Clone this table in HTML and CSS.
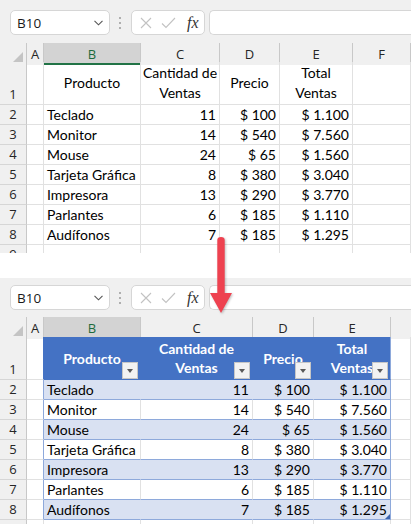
FILE: index.html
```html
<!DOCTYPE html>
<html lang="es">
<head>
<meta charset="utf-8">
<title>Tabla Excel</title>
<link rel="stylesheet" href="styles.css">
</head>
<body>
<div class="page">
  <section class="sheet sheet-top">
    <div class="toolbar">
      <div class="namebox"><span>B10</span><svg class="chev" width="9" height="6" viewBox="0 0 9 6"><path d="M0.5 0.8 L4.5 4.8 L8.5 0.8" fill="none" stroke="#555" stroke-width="1.1"/></svg></div>
      <svg class="dots" width="4" height="14" viewBox="0 0 4 14"><circle cx="2" cy="2" r="1" fill="#9a9a9a"/><circle cx="2" cy="7" r="1" fill="#9a9a9a"/><circle cx="2" cy="12" r="1" fill="#9a9a9a"/></svg>
      <div class="fxbox">
        <svg width="12" height="12" viewBox="0 0 12 12"><path d="M1 1 L11 11 M11 1 L1 11" stroke="#c2c2c2" stroke-width="1.1"/></svg>
        <svg width="15" height="12" viewBox="0 0 15 12"><path d="M1 6.5 L5 10.5 L14 1" fill="none" stroke="#c2c2c2" stroke-width="1.1"/></svg>
        <span class="fx">fx</span>
      </div>
      <div class="formula"></div>
    </div>
    <div class="row colhdr">
      <div class="corner"><svg width="10" height="10" viewBox="0 0 10 10"><polygon points="10,0 10,10 0,10" fill="#c4c4c4"/></svg></div>
      <div class="ch">A</div><div class="ch sel">B</div><div class="ch">C</div><div class="ch">D</div><div class="ch">E</div><div class="ch">F</div>
    </div>
    <div class="row r1">
      <div class="rh">1</div><div class="c"></div>
      <div class="c hd">Producto</div><div class="c hd">Cantidad de<br>Ventas</div><div class="c hd">Precio</div><div class="c hd">Total<br>Ventas</div><div class="c"></div>
    </div>
    <div class="row rn"><div class="rh">2</div><div class="c"></div><div class="c">Teclado</div><div class="c num">11</div><div class="c num">$ 100</div><div class="c num">$ 1.100</div><div class="c"></div></div>
    <div class="row rn"><div class="rh">3</div><div class="c"></div><div class="c">Monitor</div><div class="c num">14</div><div class="c num">$ 540</div><div class="c num">$ 7.560</div><div class="c"></div></div>
    <div class="row rn"><div class="rh">4</div><div class="c"></div><div class="c">Mouse</div><div class="c num">24</div><div class="c num">$ 65</div><div class="c num">$ 1.560</div><div class="c"></div></div>
    <div class="row rn"><div class="rh">5</div><div class="c"></div><div class="c">Tarjeta Gráfica</div><div class="c num">8</div><div class="c num">$ 380</div><div class="c num">$ 3.040</div><div class="c"></div></div>
    <div class="row rn"><div class="rh">6</div><div class="c"></div><div class="c">Impresora</div><div class="c num">13</div><div class="c num">$ 290</div><div class="c num">$ 3.770</div><div class="c"></div></div>
    <div class="row rn"><div class="rh">7</div><div class="c"></div><div class="c">Parlantes</div><div class="c num">6</div><div class="c num">$ 185</div><div class="c num">$ 1.110</div><div class="c"></div></div>
    <div class="row rn"><div class="rh">8</div><div class="c"></div><div class="c">Audífonos</div><div class="c num">7</div><div class="c num">$ 185</div><div class="c num">$ 1.295</div><div class="c"></div></div>
    <div class="row rn"><div class="rh">9</div><div class="c"></div><div class="c"></div><div class="c"></div><div class="c"></div><div class="c"></div><div class="c"></div></div>
  </section>

  <div class="spacer"></div>

  <section class="sheet sheet-bottom">
    <div class="toolbar">
      <div class="namebox"><span>B10</span><svg class="chev" width="9" height="6" viewBox="0 0 9 6"><path d="M0.5 0.8 L4.5 4.8 L8.5 0.8" fill="none" stroke="#555" stroke-width="1.1"/></svg></div>
      <svg class="dots" width="4" height="14" viewBox="0 0 4 14"><circle cx="2" cy="2" r="1" fill="#9a9a9a"/><circle cx="2" cy="7" r="1" fill="#9a9a9a"/><circle cx="2" cy="12" r="1" fill="#9a9a9a"/></svg>
      <div class="fxbox">
        <svg width="12" height="12" viewBox="0 0 12 12"><path d="M1 1 L11 11 M11 1 L1 11" stroke="#c2c2c2" stroke-width="1.1"/></svg>
        <svg width="15" height="12" viewBox="0 0 15 12"><path d="M1 6.5 L5 10.5 L14 1" fill="none" stroke="#c2c2c2" stroke-width="1.1"/></svg>
        <span class="fx">fx</span>
      </div>
      <div class="formula"></div>
    </div>
    <div class="row colhdr">
      <div class="corner"><svg width="10" height="10" viewBox="0 0 10 10"><polygon points="10,0 10,10 0,10" fill="#c4c4c4"/></svg></div>
      <div class="ch">A</div><div class="ch sel">B</div><div class="ch">C</div><div class="ch">D</div><div class="ch">E</div><div class="ch blank"></div>
    </div>
    <div class="row r1">
      <div class="rh">1</div><div class="c a-edge-h"></div>
      <div class="c th">Producto<span class="fbtn"></span></div>
      <div class="c th">Cantidad de<br>Ventas<span class="fbtn"></span></div>
      <div class="c th">Precio<span class="fbtn"></span></div>
      <div class="c th">Total<br>Ventas<span class="fbtn"></span></div>
      <div class="c"></div>
    </div>
    <div class="row rn band"><div class="rh">2</div><div class="c a-edge"></div><div class="c tb">Teclado</div><div class="c tb num">11</div><div class="c tb num">$ 100</div><div class="c tb num last">$ 1.100</div><div class="c"></div></div>
    <div class="row rn"><div class="rh">3</div><div class="c a-edge"></div><div class="c tb">Monitor</div><div class="c tb num">14</div><div class="c tb num">$ 540</div><div class="c tb num last">$ 7.560</div><div class="c"></div></div>
    <div class="row rn band"><div class="rh">4</div><div class="c a-edge"></div><div class="c tb">Mouse</div><div class="c tb num">24</div><div class="c tb num">$ 65</div><div class="c tb num last">$ 1.560</div><div class="c"></div></div>
    <div class="row rn"><div class="rh">5</div><div class="c a-edge"></div><div class="c tb">Tarjeta Gráfica</div><div class="c tb num">8</div><div class="c tb num">$ 380</div><div class="c tb num last">$ 3.040</div><div class="c"></div></div>
    <div class="row rn band"><div class="rh">6</div><div class="c a-edge"></div><div class="c tb">Impresora</div><div class="c tb num">13</div><div class="c tb num">$ 290</div><div class="c tb num last">$ 3.770</div><div class="c"></div></div>
    <div class="row rn"><div class="rh">7</div><div class="c a-edge"></div><div class="c tb">Parlantes</div><div class="c tb num">6</div><div class="c tb num">$ 185</div><div class="c tb num last">$ 1.110</div><div class="c"></div></div>
    <div class="row rn band"><div class="rh">8</div><div class="c a-edge"></div><div class="c tb">Audífonos</div><div class="c tb num">7</div><div class="c tb num">$ 185</div><div class="c tb num last">$ 1.295<span class="handle"></span></div><div class="c"></div></div>
    <div class="row rn"><div class="rh"></div><div class="c"></div><div class="c"></div><div class="c"></div><div class="c"></div><div class="c"></div><div class="c"></div></div>
  </section>

  <svg class="arrow" width="26" height="80" viewBox="0 0 26 80">
    <path d="M9.3 4 Q9.3 1 13 1 Q16.7 1 16.7 4 L16.7 57 L24 57 L13 77 L2 57 L9.3 57 Z" fill="#ee4250"/>
  </svg>
</div>
</body>
</html>
```

FILE: styles.css
```css
* { box-sizing: border-box; }

body {
  margin: 0;
  background: #ffffff;
  font-family: Lato, "Liberation Sans", sans-serif;
  color: #000;
}

.page {
  position: relative;
  width: 411px;
  height: 524px;
  overflow: hidden;
}

.sheet { overflow: hidden; }
.sheet-top { height: 253px; --cols: 27px 17px 97px 79px 60px 73px 58px; }
.spacer { height: 25px; }
.sheet-bottom { height: 246px; --cols: 27px 17px 97px 112px 61px 77px 20px; }

/* toolbar */
.toolbar {
  display: flex;
  align-items: flex-start;
  background: #f0f0f0;
  padding-left: 10px;
}
.sheet-top .toolbar { height: 43px; padding-top: 10px; }
.sheet-bottom .toolbar { height: 39px; padding-top: 7px; }

.namebox {
  width: 100px;
  height: 25px;
  background: #fff;
  border: 1px solid #d6d6d6;
  border-radius: 5px;
  display: flex;
  align-items: center;
  justify-content: space-between;
  padding: 0 6px 0 6px;
  font-family: "Open Sans", "Noto Sans", sans-serif;
  font-size: 13.5px;
  color: #1a1a1a;
}

.dots { margin: 6px 0 0 8px; }

.fxbox {
  margin-left: 9px;
  width: 74px;
  height: 25px;
  background: #fff;
  border: 1px solid #d6d6d6;
  border-radius: 5px;
  display: flex;
  align-items: center;
  gap: 9px;
  padding-left: 8px;
}
.fx {
  font-family: "Liberation Serif", serif;
  font-style: italic;
  font-size: 16px;
  color: #333;
  margin-left: 2px;
}

.formula {
  flex: 1;
  margin-left: 4px;
  height: 25px;
  background: #fff;
  border: 1px solid #d6d6d6;
  border-right: none;
  border-radius: 5px 0 0 5px;
}

/* grid rows */
.row {
  display: grid;
  grid-template-columns: var(--cols);
}
.sheet-top .colhdr { height: 19px; }
.sheet-bottom .colhdr { height: 20px; }
.r1 { height: 43px; }
.rn { height: 20px; }

.corner {
  background: #f0f0f0;
  border-right: 1px solid #c8c8c8;
  display: flex;
  align-items: flex-end;
  justify-content: flex-end;
  padding: 0 3px 3px 0;
}

.ch {
  background: #f0f0f0;
  border-right: 1px solid #c8c8c8;
  display: flex;
  align-items: center;
  justify-content: center;
  font-family: "Open Sans", "Noto Sans", sans-serif;
  font-size: 13px;
  color: #262626;
}
.ch.sel {
  background: #d3d3d3;
  color: #1d6b3c;
  border-bottom: 2px solid #217346;
  padding-top: 2px;
}
.ch.blank { border-right: none; }

.rh {
  background: #f0f0f0;
  border-right: 1px solid #c8c8c8;
  border-bottom: 1px solid #d6d6d6;
  display: flex;
  align-items: flex-end;
  justify-content: center;
  font-family: "Open Sans", "Noto Sans", sans-serif;
  font-size: 13px;
  color: #262626;
  padding-bottom: 1px;
}

.c {
  position: relative;
  border-right: 1px solid #e1e1e1;
  border-bottom: 1px solid #e1e1e1;
  display: flex;
  align-items: flex-end;
  padding: 0 3px 0 3px;
  font-size: 14px;
  line-height: 19px;
  white-space: nowrap;
}
.num { justify-content: flex-end; }

.hd {
  align-items: center;
  justify-content: center;
  text-align: center;
  line-height: 20px;
}

/* table (bottom) */
.a-edge-h { border-right-color: #4472c4; }
.a-edge { border-right-color: #8ea9db; }

.th {
  background: #4472c4;
  border-right-color: #4472c4;
  border-bottom-color: #4472c4;
  color: #fff;
  font-weight: bold;
  align-items: center;
  justify-content: center;
  text-align: center;
  line-height: 19px;
}
.th:nth-child(6) { border-right-color: #8ea9db; }

.fbtn {
  position: absolute;
  right: 2px;
  bottom: 0;
  width: 16px;
  height: 17px;
  background: #f2f2f2;
  border: 1px solid #c6c6c6;
}
.fbtn::after {
  content: "";
  position: absolute;
  left: 4px;
  top: 6px;
  border-left: 3.5px solid transparent;
  border-right: 3.5px solid transparent;
  border-top: 4px solid #5a5a5a;
}

.tb { border-bottom-color: #8ea9db; }
.band .tb { background: #d9e1f2; border-right-color: #d9e1f2; }
.tb.last { border-right-color: #8ea9db; }
.band .tb.last { border-right-color: #8ea9db; }

.handle {
  position: absolute;
  right: 0;
  bottom: 0;
  width: 0;
  height: 0;
  border-left: 5px solid transparent;
  border-bottom: 5px solid #3b64b0;
}

.arrow {
  position: absolute;
  left: 208px;
  top: 236px;
  filter: drop-shadow(1px 1px 1px rgba(0,0,0,0.25));
}
```
